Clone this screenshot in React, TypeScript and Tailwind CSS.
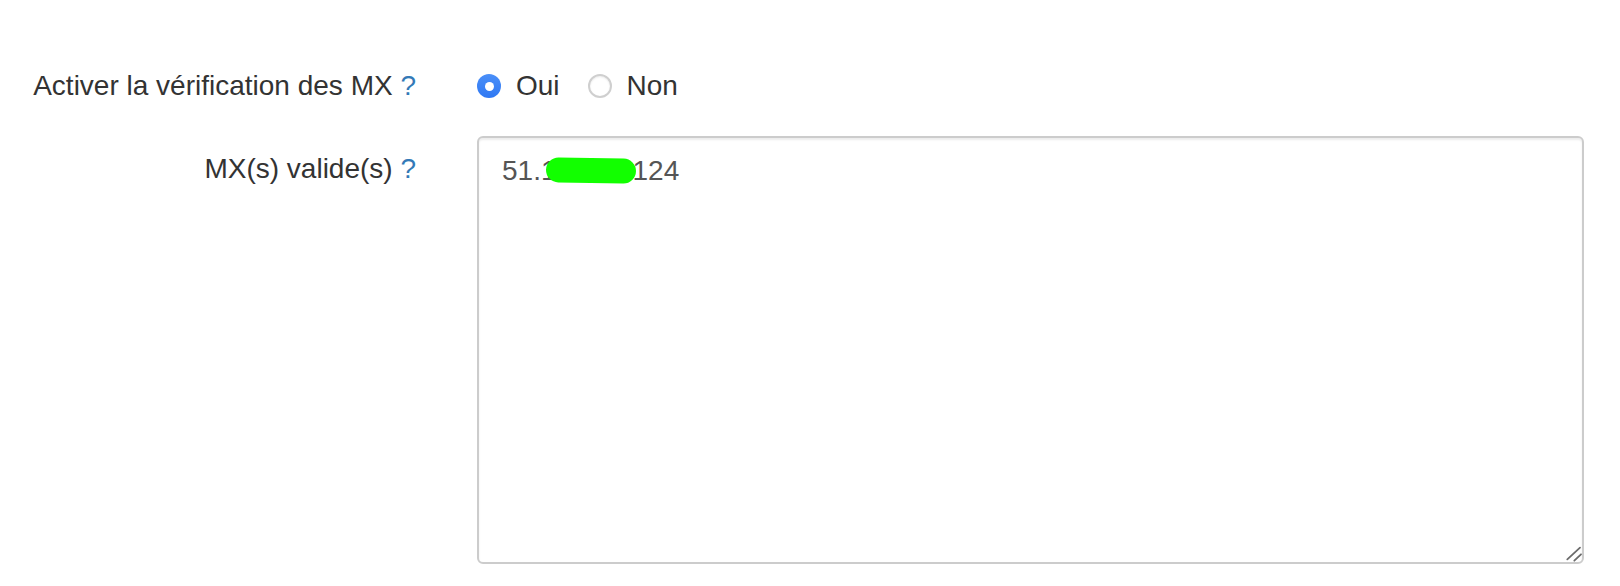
import React from 'react';

const font = "font-['Liberation_Sans','Helvetica_Neue',Helvetica,Arial,sans-serif]";

const Help = () => <span className="text-[#337ab7]">?</span>;

const Radio = ({ checked, label }: { checked?: boolean; label: string }) => (
    <label className="flex items-center gap-[15px]">
        {checked ? (
            <span className="flex w-6 h-6 items-center justify-center rounded-full bg-gradient-to-b from-[#4a8ff8] to-[#2f78f3]">
                <span className="w-[9px] h-[9px] rounded-full bg-white" />
            </span>
        ) : (
            <span className="w-6 h-6 rounded-full border-2 border-[#cfcfcf] bg-white shadow-[inset_0_1px_2px_rgba(0,0,0,0.08)]" />
        )}
        <span>{label}</span>
    </label>
);

export default function App() {
    return (
        <div className={`${font} bg-white w-[1620px] h-[586px] pt-[66px] text-[28px] leading-[40px] text-[#333333]`}>
            {/* MX check */}
            <div className="flex h-[40px] items-center gap-[61px]">
                <div className="w-[416px] text-right">
                    Activer la vérification des MX <Help />
                </div>
                <div className="flex items-center gap-[28px]">
                    <Radio checked label="Oui" />
                    <Radio label="Non" />
                </div>
            </div>

            {/* valid MX list */}
            <div className="flex items-start gap-[61px] mt-[30px]">
                <div className="w-[416px] text-right pt-[13px]">
                    MX(s) valide(s) <Help />
                </div>
                <div className="relative w-[1107px] h-[428px] border-2 border-[#cccccc] rounded-[6px] px-[23px] pt-[13px] text-[#555555] shadow-[inset_0_2px_2px_rgba(0,0,0,0.075)]">
                    <div className="flex items-start">
                        <span>51.1</span>
                        <span className="inline-block w-[90px] h-[25px] mt-[7px] -ml-[11px] -mr-[3px] rounded-full bg-[#12ff00] rotate-[1deg]" />
                        <span>124</span>
                    </div>
                    <svg className="absolute -right-[2px] -bottom-[2px]" width="20" height="20" viewBox="0 0 20 20">
                        <line x1="3.3" y1="15.3" x2="16" y2="3.7" stroke="#6b6b6b" strokeWidth="1.8" strokeLinecap="round" />
                        <line x1="10.3" y1="16.7" x2="17" y2="10.3" stroke="#6b6b6b" strokeWidth="1.8" strokeLinecap="round" />
                    </svg>
                </div>
            </div>
        </div>
    );
}
